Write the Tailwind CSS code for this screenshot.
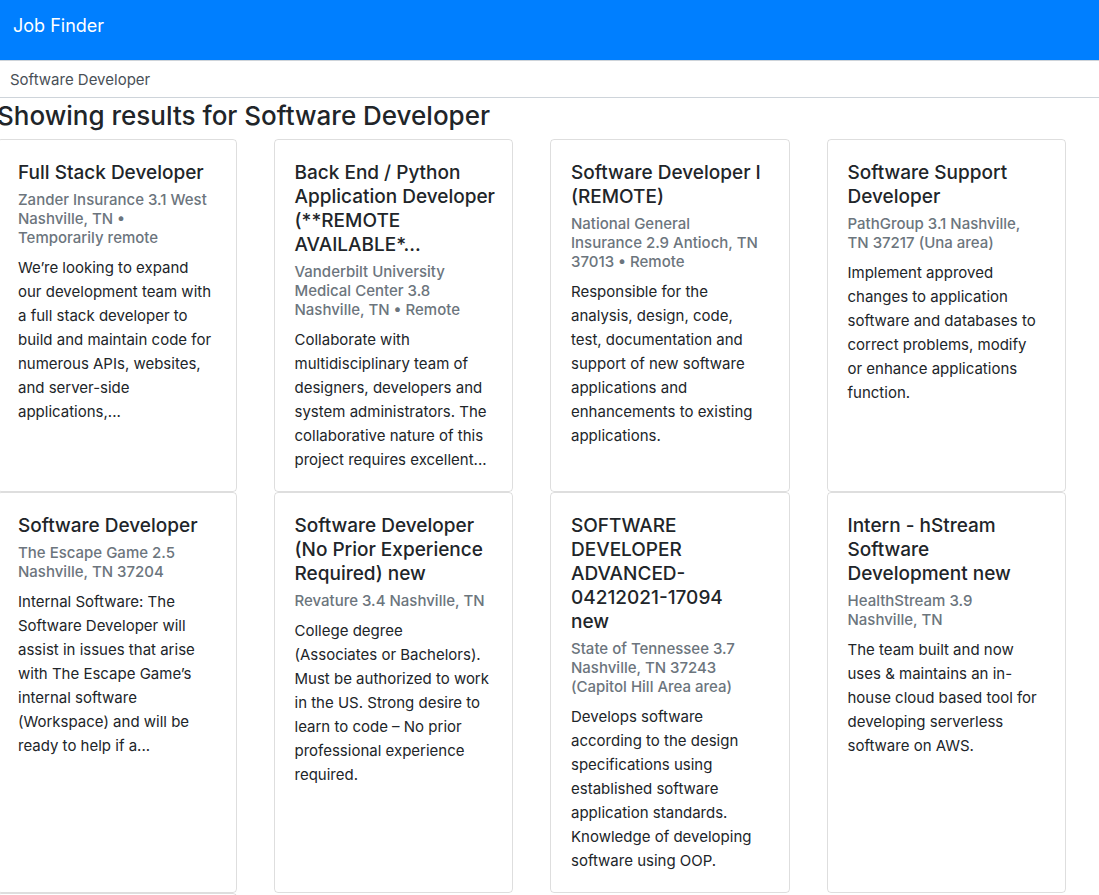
<!DOCTYPE html>
<html lang="en">
<head>
<meta charset="utf-8">
<meta name="viewport" content="width=device-width, initial-scale=1">
<title>Job Finder</title>
<script src="https://cdn.jsdelivr.net/npm/@tailwindcss/browser@4"></script>
</head>
<body class="overflow-x-hidden bg-white font-['Inter',sans-serif] text-[15px] leading-6 text-[#212529]">
<header class="flex h-15 items-start bg-[#007fff] px-[13px] pt-[11px]">
<a href="#" class="text-[18px] leading-[30px] text-white">Job Finder</a>
</header>
<form>
<input type="text" aria-label="Search jobs" value="Software Developer" class="block h-[38px] w-full border-y border-[#ced4da] px-[10px] text-[15px] text-[#495057] outline-none">
</form>
<main class="-mr-1 -ml-[3px]">
<h1 class="mb-[6px] text-[26px] leading-[35px] font-medium">Showing results for Software Developer</h1>
<section class="grid grid-cols-4">
<article class="mr-[37px] rounded border border-black/13 px-5 pt-[21px] pb-[19px]">
<h2 class="mb-[5px] text-[19px] leading-6 font-medium">Full Stack Developer</h2>
<h3 class="mb-[9px] leading-[19px] font-medium text-[#6c757d]">Zander Insurance 3.1 West Nashville, TN •<br>Temporarily remote</h3>
<p>We’re looking to expand<br>our development team with<br>a full stack developer to<br>build and maintain code for numerous APIs, websites, and server-side applications,...</p>
</article>
<article class="mr-[37px] rounded border border-black/13 px-5 pt-[21px] pb-[19px]">
<h2 class="-mr-2 mb-[5px] text-[19px] leading-6 font-medium">Back End / Python<br>Application Developer<br>(**REMOTE<br>AVAILABLE*...</h2>
<h3 class="mb-[9px] leading-[19px] font-medium text-[#6c757d]">Vanderbilt University Medical Center 3.8 Nashville, TN • Remote</h3>
<p>Collaborate with multidisciplinary team of designers, developers and system administrators. The collaborative nature of this project requires excellent...</p>
</article>
<article class="mr-[37px] rounded border border-black/13 px-5 pt-[21px] pb-[19px]">
<h2 class="mb-[5px] text-[19px] leading-6 font-medium">Software Developer I (REMOTE)</h2>
<h3 class="mb-[9px] leading-[19px] font-medium text-[#6c757d]">National General<br>Insurance 2.9 Antioch, TN 37013 • Remote</h3>
<p>Responsible for the analysis, design, code,<br>test, documentation and<br>support of new software applications and enhancements to existing applications.</p>
</article>
<article class="mr-[37px] rounded border border-black/13 px-5 pt-[21px] pb-[19px]">
<h2 class="mb-[5px] text-[19px] leading-6 font-medium">Software Support Developer</h2>
<h3 class="mb-[9px] leading-[19px] font-medium text-[#6c757d]">PathGroup 3.1 Nashville,<br>TN 37217 (Una area)</h3>
<p>Implement approved changes to application software and databases to correct problems, modify<br>or enhance applications function.</p>
</article>
<article class="mr-[37px] rounded border border-black/13 px-5 pt-[21px] pb-[19px]">
<h2 class="mb-[5px] text-[19px] leading-6 font-medium">Software Developer</h2>
<h3 class="mb-[9px] leading-[19px] font-medium text-[#6c757d]">The Escape Game 2.5 Nashville, TN 37204</h3>
<p>Internal Software: The Software Developer will assist in issues that arise with The Escape Game’s internal software (Workspace) and will be ready to help if a...</p>
</article>
<article class="mr-[37px] rounded border border-black/13 px-5 pt-[21px] pb-[19px]">
<h2 class="mb-[5px] text-[19px] leading-6 font-medium">Software Developer (No Prior Experience Required) new</h2>
<h3 class="mb-[9px] leading-[19px] font-medium text-[#6c757d]">Revature 3.4 Nashville, TN</h3>
<p>College degree<br>(Associates or Bachelors).<br>Must be authorized to work<br>in the US. Strong desire to<br>learn to code – No prior professional experience required.</p>
</article>
<article class="mr-[37px] rounded border border-black/13 px-5 pt-[21px] pb-[19px]">
<h2 class="mb-[5px] text-[19px] leading-6 font-medium">SOFTWARE DEVELOPER ADVANCED-04212021-17094<br>new</h2>
<h3 class="mb-[9px] leading-[19px] font-medium text-[#6c757d]">State of Tennessee 3.7 Nashville, TN 37243 (Capitol Hill Area area)</h3>
<p>Develops software according to the design specifications using established software application standards. Knowledge of developing software using OOP.</p>
</article>
<article class="mr-[37px] rounded border border-black/13 px-5 pt-[21px] pb-[19px]">
<h2 class="mb-[5px] text-[19px] leading-6 font-medium">Intern - hStream Software Development new</h2>
<h3 class="mb-[9px] leading-[19px] font-medium text-[#6c757d]">HealthStream 3.9 Nashville, TN</h3>
<p>The team built and now uses &amp; maintains an in-house cloud based tool for developing serverless software on AWS.</p>
</article>
<article class="mr-[37px] rounded border border-black/13 px-5 pt-[21px] pb-[19px]"></article>
</section>
</main>
</body>
</html>
